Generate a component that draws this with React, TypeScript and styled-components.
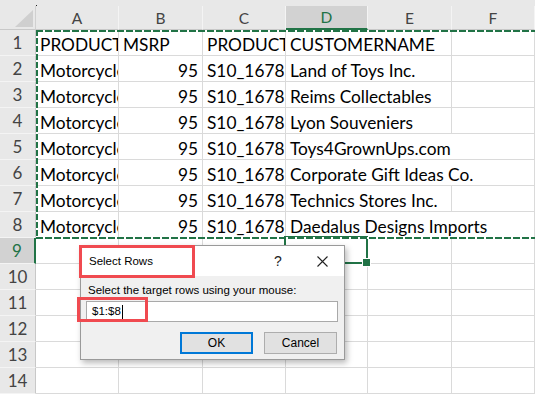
import React from 'react'
import styled, { createGlobalStyle, css } from 'styled-components'

const GREEN = '#217346'
const GRID = '#dadada'
const HEAD_BG = '#e8e8e8'
const HEAD_ON = '#d2d2d2'
const COLS = [83, 84, 83, 82, 84, 83]
const LETTERS = ['A', 'B', 'C', 'D', 'E', 'F']
const ACTIVE_COL = 3
const ACTIVE_ROW = 9

type Cell = { text: string; right?: boolean; span?: number }

const DATA: Cell[][] = [
  [{ text: 'PRODUCTLINE' }, { text: 'MSRP' }, { text: 'PRODUCTCODE' }, { text: 'CUSTOMERNAME', span: 2 }],
  [{ text: 'Motorcycles' }, { text: '95', right: true }, { text: 'S10_1678' }, { text: 'Land of Toys Inc.', span: 2 }],
  [{ text: 'Motorcycles' }, { text: '95', right: true }, { text: 'S10_1678' }, { text: 'Reims Collectables', span: 2 }],
  [{ text: 'Motorcycles' }, { text: '95', right: true }, { text: 'S10_1678' }, { text: 'Lyon Souveniers', span: 2 }],
  [{ text: 'Motorcycles' }, { text: '95', right: true }, { text: 'S10_1678' }, { text: 'Toys4GrownUps.com', span: 3 }],
  [{ text: 'Motorcycles' }, { text: '95', right: true }, { text: 'S10_1678' }, { text: 'Corporate Gift Ideas Co.', span: 3 }],
  [{ text: 'Motorcycles' }, { text: '95', right: true }, { text: 'S10_1678' }, { text: 'Technics Stores Inc.', span: 2 }],
  [{ text: 'Motorcycles' }, { text: '95', right: true }, { text: 'S10_1678' }, { text: 'Daedalus Designs Imports', span: 3 }],
]

const Global = createGlobalStyle`
  html, body { margin: 0; padding: 0; background: #fff; }
  body { width: 535px; height: 396px; overflow: hidden; font-family: Lato, "Liberation Sans", sans-serif; }
  * { box-sizing: border-box; }
`

const Sheet = styled.div`
  position: relative;
  width: 535px;
  height: 396px;
  overflow: hidden;
  background: #fff;
`

const TopStrip = styled.div`
  height: 6px;
  background: ${HEAD_BG};
  position: relative;
  &::after {
    content: '';
    position: absolute;
    left: 36px;
    bottom: 0;
    width: 1px;
    height: 1px;
    background: #222;
  }
`

const HeaderRow = styled.div`
  display: grid;
  grid-template-columns: 36px ${COLS.map(c => c + 'px').join(' ')};
  height: 24px;
  background: ${HEAD_BG};
`

const Corner = styled.div`
  position: relative;
  border-right: 1px solid #d0d0d0;
  border-bottom: 1px solid #c8c8c8;
  &::after {
    content: '';
    position: absolute;
    left: 15px;
    top: 4px;
    width: 18px;
    height: 17px;
    background: #cfcfcf;
    clip-path: polygon(100% 0, 100% 100%, 0 100%);
  }
`

const ColHead = styled.div<{ $on?: boolean }>`
  display: flex;
  align-items: center;
  justify-content: center;
  font-size: 15.5px;
  color: #444;
  border-right: 1px solid #f4f4f4;
  border-bottom: 1px solid #c8c8c8;
  ${p => p.$on && css`
    background: ${HEAD_ON};
    color: ${GREEN};
    border-bottom: 2px solid ${GREEN};
  `}
`

const Body = styled.div`
  display: flex;
`

const RowHeads = styled.div`
  width: 36px;
  flex: none;
  background: ${HEAD_BG};
`

const RowNum = styled.div<{ $on?: boolean }>`
  height: 26px;
  display: flex;
  align-items: center;
  justify-content: center;
  font-size: 17px;
  color: #444;
  border-bottom: 1px solid #f4f4f4;
  border-right: 1px solid #c8c8c8;
  ${p => p.$on && css`
    background: ${HEAD_ON};
    color: ${GREEN};
    border-right: 2px solid ${GREEN};
  `}
`

const Cells = styled.div`
  flex: 1;
`

const CopyRange = styled.div`
  position: relative;
  &::after {
    content: '';
    position: absolute;
    left: 0;
    right: 0;
    top: 0;
    bottom: -1px;
    pointer-events: none;
    z-index: 3;
    background:
      repeating-linear-gradient(90deg, ${GREEN} 0 7px, #fff 7px 9px) top left / 100% 2px no-repeat,
      repeating-linear-gradient(90deg, ${GREEN} 0 7px, #fff 7px 9px) bottom left / 100% 2px no-repeat,
      repeating-linear-gradient(180deg, ${GREEN} 0 6px, #fff 6px 8px) top left / 2px 100% no-repeat;
  }
`

const Row = styled.div`
  display: grid;
  grid-template-columns: ${COLS.map(c => c + 'px').join(' ')};
  height: 26px;
`

const CellBox = styled.div<{ $right?: boolean; $span?: number; $active?: boolean }>`
  position: relative;
  grid-column: span ${p => p.$span ?? 1};
  height: 26px;
  padding: 4px 4px 0 4px;
  font-size: 17.3px;
  line-height: 22px;
  color: #000;
  white-space: nowrap;
  overflow: hidden;
  text-align: ${p => (p.$right ? 'right' : 'left')};
  border-right: 1px solid ${GRID};
  border-bottom: 1px solid ${GRID};
  ${p => p.$active && css`
    overflow: visible;
    z-index: 2;
    &::before {
      content: '';
      position: absolute;
      left: -2px;
      top: -2px;
      right: -1px;
      bottom: -1px;
      border: 2px solid ${GREEN};
    }
    &::after {
      content: '';
      position: absolute;
      right: -4px;
      bottom: -4px;
      width: 7px;
      height: 7px;
      background: ${GREEN};
      border: 1px solid #fff;
    }
  `}
`

const Dialog = styled.div`
  position: absolute;
  left: 80px;
  top: 245px;
  width: 265px;
  height: 115px;
  border: 1px solid #9a9a9a;
  background: #f0f0f0;
  box-shadow: 2px 3px 6px rgba(0, 0, 0, 0.28);
  font-family: "Liberation Sans", Arial, sans-serif;
  z-index: 10;
  display: flex;
  flex-direction: column;
`

const TitleBar = styled.div`
  height: 30px;
  background: #fff;
  display: flex;
  align-items: center;
  padding-left: 8px;
  font-size: 11.5px;
  color: #000;
`

const TitleText = styled.span`
  flex: 1;
`

const TitleButton = styled.span`
  width: 44px;
  height: 30px;
  display: flex;
  align-items: center;
  justify-content: center;
  font-size: 14px;
  color: #222;
`

const DialogBody = styled.div`
  flex: 1;
  padding: 5px 6px 0 5px;
  display: flex;
  flex-direction: column;
`

const Label = styled.div`
  font-size: 11.5px;
  color: #000;
  height: 18px;
  line-height: 18px;
  padding-left: 2px;
`

const Input = styled.div`
  position: relative;
  height: 21px;
  margin-top: 2px;
  background: #fff;
  border: 1px solid #a9a9a9;
  font-size: 11.5px;
  line-height: 19px;
  padding-left: 5px;
  display: flex;
  align-items: center;
`

const Caret = styled.span`
  display: inline-block;
  width: 1px;
  height: 14px;
  margin-left: 1px;
  background: #000;
`

const Buttons = styled.div`
  display: flex;
  justify-content: flex-end;
  gap: 11px;
  margin-top: 10px;
  padding-right: 1px;
`

const Button = styled.div<{ $primary?: boolean }>`
  width: 73px;
  height: 22px;
  display: flex;
  align-items: center;
  justify-content: center;
  font-size: 12px;
  color: #000;
  background: #e1e1e1;
  border: ${p => (p.$primary ? `2px solid #0078d7` : `1px solid #adadad`)};
`

const Callout = styled.div<{ $l: number; $t: number; $w: number; $h: number }>`
  position: absolute;
  left: ${p => p.$l}px;
  top: ${p => p.$t}px;
  width: ${p => p.$w}px;
  height: ${p => p.$h}px;
  border: 3px solid #f04a50;
  pointer-events: none;
  z-index: 20;
`

const CloseIcon = () => (
  <svg width="11" height="11" viewBox="0 0 11 11">
    <path d="M0.5 0.5 L10.5 10.5 M10.5 0.5 L0.5 10.5" stroke="#222" strokeWidth="1.1" />
  </svg>
)

const renderRow = (cells: Cell[], rowNo: number) => {
  let col = 0
  const filled: React.ReactNode[] = []
  cells.forEach((c, i) => {
    filled.push(
      <CellBox
        key={i}
        $right={c.right}
        $span={c.span}
        $active={rowNo === ACTIVE_ROW && col === ACTIVE_COL}
      >
        {c.text}
      </CellBox>
    )
    col += c.span ?? 1
  })
  for (; col < LETTERS.length; col++) {
    filled.push(<CellBox key={'e' + col} $active={rowNo === ACTIVE_ROW && col === ACTIVE_COL} />)
  }
  return <Row key={rowNo}>{filled}</Row>
}

export default function App() {
  const rowNums = Array.from({ length: 14 }, (_, i) => i + 1)
  return (
    <>
      <Global />
      <Sheet>
        <TopStrip />
        <HeaderRow>
          <Corner />
          {LETTERS.map((l, i) => (
            <ColHead key={l} $on={i === ACTIVE_COL}>{l}</ColHead>
          ))}
        </HeaderRow>
        <Body>
          <RowHeads>
            {rowNums.map(n => (
              <RowNum key={n} $on={n === ACTIVE_ROW}>{n}</RowNum>
            ))}
          </RowHeads>
          <Cells>
            <CopyRange>
              {DATA.map((r, i) => renderRow(r, i + 1))}
            </CopyRange>
            {rowNums.slice(8).map(n => renderRow([], n))}
          </Cells>
        </Body>

        <Dialog>
          <Callout $l={-2} $t={-1} $w={116} $h={33} />
          <TitleBar>
            <TitleText>Select Rows</TitleText>
            <TitleButton>?</TitleButton>
            <TitleButton><CloseIcon /></TitleButton>
          </TitleBar>
          <DialogBody>
            <Label>Select the target rows using your mouse:</Label>
            <Input>
              <Callout $l={-10} $t={-5} $w={71} $h={25} />
              $1:$8<Caret />
            </Input>
            <Buttons>
              <Button $primary>OK</Button>
              <Button>Cancel</Button>
            </Buttons>
          </DialogBody>
        </Dialog>
      </Sheet>
    </>
  )
}
